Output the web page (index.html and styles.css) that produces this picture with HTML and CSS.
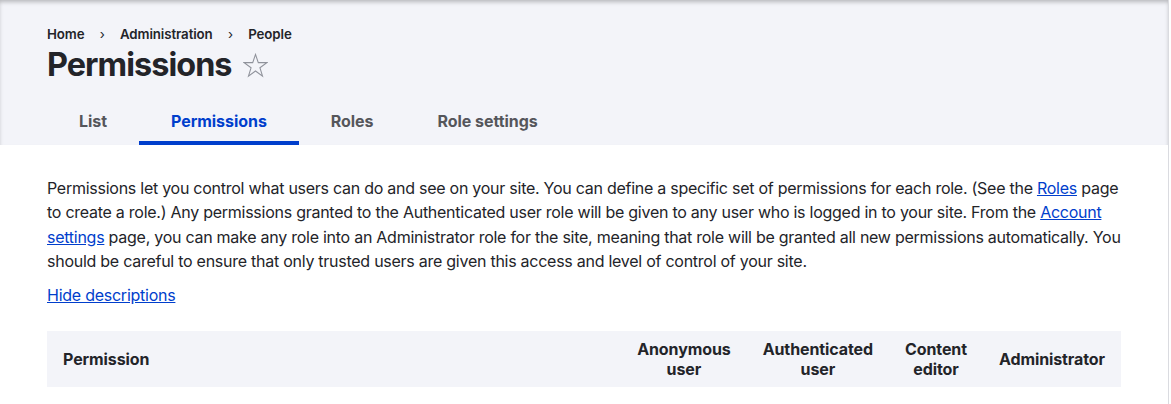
FILE: index.html
```html
<!DOCTYPE html>
<html lang="en">

<head>
    <meta charset="UTF-8">
    <meta name="viewport" content="width=device-width, initial-scale=1.0">
    <title>Permissions</title>
    <link rel="stylesheet" href="styles.css">
</head>

<body>
    <div class="page">

        <header class="page-header">
            <nav class="breadcrumb">
                <a href="#">Home</a>
                <span class="sep">›</span>
                <a href="#">Administration</a>
                <span class="sep">›</span>
                <a href="#">People</a>
            </nav>

            <div class="title-row">
                <h1>Permissions</h1>
                <svg class="star" width="25" height="25" viewBox="0 0 26 26">
                    <polygon points="13,1.5 15.9,10 24.8,10 17.6,15.3 20.3,24 13,18.7 5.7,24 8.4,15.3 1.2,10 10.1,10"
                        fill="none" stroke="#8f929b" stroke-width="1.1" stroke-linejoin="miter" />
                </svg>
            </div>

            <ul class="tabs">
                <li><a href="#">List</a></li>
                <li class="active"><a href="#">Permissions</a></li>
                <li><a href="#">Roles</a></li>
                <li><a href="#">Role settings</a></li>
            </ul>
        </header>

        <main class="content">
            <p class="intro">Permissions let you control what users can do and see on your site. You can define a
                specific set of permissions for each role. (See the <a href="#">Roles</a> page<br>to create a role.) Any
                permissions granted to the Authenticated user role will be given to any user who is logged in to your
                site. From the <a href="#">Account<br>settings</a> page, you can make any role into an Administrator role
                for the site, meaning that role will be granted all new permissions automatically. You<br>should be careful
                to ensure that only trusted users are given this access and level of control of your site.</p>

            <p class="toggle"><a href="#">Hide descriptions</a></p>

            <table class="perm-table">
                <thead>
                    <tr>
                        <th class="perm-col">Permission</th>
                        <th class="role-col">Anonymous user</th>
                        <th class="role-col">Authenticated user</th>
                        <th class="role-col">Content editor</th>
                        <th class="role-col">Administrator</th>
                    </tr>
                </thead>
            </table>
        </main>

    </div>
</body>

</html>
```

FILE: styles.css
```css
html {
    background-color: #fff;
}

body {
    font-family: 'Inter', 'Noto Sans', sans-serif;
    margin: 0;
    padding: 0;
    color: #232429;
    font-size: 16px;
}

.page {
    margin-right: 2px;
    border-right: 1px solid #dadbe0;
    min-height: 404px;
}

.page-header {
    background-color: #f3f4f9;
    padding: 25px 47px 0;
    box-shadow: inset 0 3px 4px -1px rgba(0, 0, 0, 0.25);
}

.breadcrumb {
    font-size: 13.3px;
    font-weight: 600;
    line-height: 18px;
    letter-spacing: -0.1px;
}

.breadcrumb a {
    color: #232429;
    text-decoration: none;
}

.breadcrumb .sep {
    margin: 0 12px;
    font-weight: 400;
}

.title-row {
    display: flex;
    align-items: center;
    gap: 11px;
    margin-top: 2px;
}

h1 {
    margin: 0;
    font-size: 32.4px;
    line-height: 40px;
    font-weight: 700;
    letter-spacing: -0.95px;
}

.star {
    margin-top: 1px;
}

.tabs {
    display: flex;
    list-style: none;
    margin: 12px 0 0;
    padding: 0;
}

.tabs a {
    display: block;
    padding: 14px 32px 10px;
    font-size: 16px;
    font-weight: 700;
    line-height: 20px;
    letter-spacing: -0.05px;
    color: #55565b;
    text-decoration: none;
    border-bottom: 4px solid transparent;
}

.tabs .active a {
    color: #003ecc;
    border-bottom-color: #003ecc;
}

.content {
    padding: 31px 47px 0;
}

.intro {
    margin: 0;
    line-height: 24.3px;
    letter-spacing: -0.26px;
    white-space: nowrap;
}

a {
    color: #003ecc;
}

.toggle {
    margin: 10px 0 24px;
    line-height: 24px;
    letter-spacing: -0.25px;
}

.perm-table {
    width: 100%;
    border-collapse: collapse;
}

.perm-table th {
    background-color: #f3f4f9;
    font-weight: 700;
    font-size: 16px;
    line-height: 20px;
    letter-spacing: -0.1px;
    padding: 8px 16px;
    height: 40px;
    vertical-align: middle;
}

.perm-col {
    text-align: left;
}

.role-col {
    width: 1px;
    text-align: center;
}
```
